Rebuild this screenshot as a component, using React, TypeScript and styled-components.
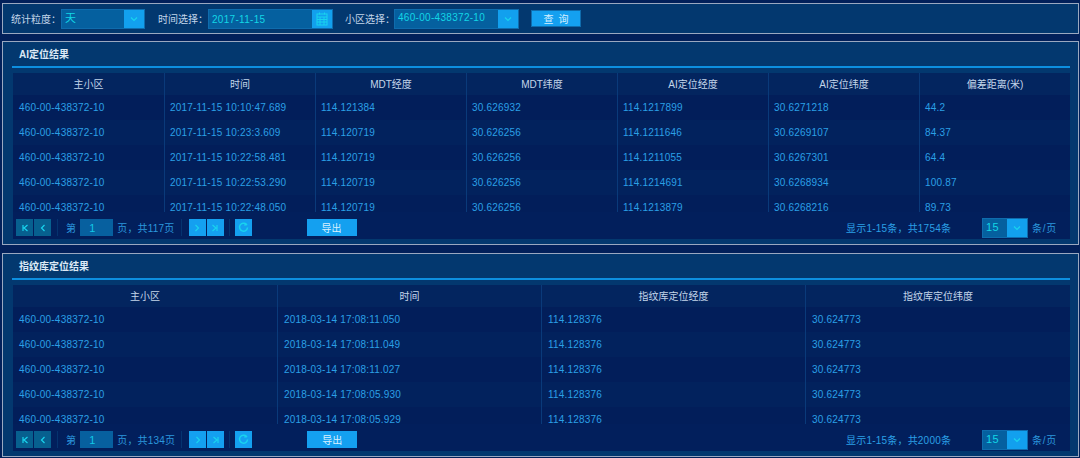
import React from "react";
import styled, { createGlobalStyle } from "styled-components";

const Global = createGlobalStyle`
  html, body { margin: 0; padding: 0; background: #02205a; }
  #root { width: 1080px; height: 458px; overflow: hidden; }
  * { box-sizing: border-box; }
`;
const FONT = `"Liberation Sans", "Noto Sans CJK SC", sans-serif`;
const Page = styled.div`
  width: 1080px; height: 458px; padding: 3px 1px 0 2px;
  display: flex; flex-direction: column; background: #02205a;
  font-family: ${FONT}; font-size: 10px; color: #2f9fe0;
`;
const Toolbar = styled.div`
  height: 31px; flex: none; margin-bottom: 7px; border: 1px solid #9aa8c0; background: #03386f;
  display: flex; align-items: center; padding-left: 8px;
`;
const Label = styled.span`
  color: #c4d6ea; font-size: 10px; white-space: nowrap; width: ${p => p.$w}px; flex: none;
`;
const Combo = styled.div`
  display: flex; height: 20px; flex: none; width: ${p => p.$w}px; margin-right: ${p => p.$mr}px;
  border: 1px solid #0f6cad; background: #05609f;
`;
const ComboText = styled.span`
  flex: 1; min-width: 0; padding-left: 3px; line-height: 16px; font-size: ${p => p.$fs || 10}px;
  color: #12d6e6; letter-spacing: .3px; white-space: nowrap;
`;
const DateText = styled(ComboText)`
  line-height: 20px;
`;
const ComboBtn = styled.span`
  width: 20px; flex: none; background: #12a0ee; display: flex; align-items: center; justify-content: center;
`;
const Query = styled.button`
  width: 50px; height: 17px; border: 1px solid #0f6cad; background: #14a0f0; color: #d8f0ff;
  font: 10px ${FONT}; padding: 0; word-spacing: 2px;
`;
const Panel = styled.section`
  height: 204px; flex: none; border: 1px solid #9aa8c0; background: #03386f;
  display: flex; flex-direction: column; padding: 0 8px 5px 9px; margin-bottom: 8px;
`;
const Title = styled.div`
  height: 26px; flex: none; padding-left: 7px; line-height: 26px; font-size: 10px; font-weight: 700;
  color: #dbe8f5; border-bottom: 2px solid #0d8fe0;
`;
const Body = styled.div`
  height: 166px; flex: none; margin: 5px 0 0 1px; background: #021f5c; display: flex; flex-direction: column;
`;
const TableClip = styled.div`
  height: 139px; overflow: hidden; flex: none;
`;
const Grid = styled.div`
  display: grid; grid-template-columns: ${p => p.$cols};
`;
const Head = styled.div`
  height: 22px; line-height: 24px; text-align: center; color: #c4d6ea; font-size: 10px;
  border-left: 1px solid #0a3a7a; background: #03255f;
  &:first-child { border-left: 0; }
`;
const Cell = styled.div`
  height: 25px; line-height: 25px; padding-left: ${p => p.$pad}px; color: #2ba0e6; font-size: 10px;
  border-left: 1px solid ${p => p.$first ? "transparent" : "#0a3a7a"}; white-space: nowrap; letter-spacing: .2px;
  background: ${p => p.$alt ? "#02225d" : "#021e5a"};
`;
const Pager = styled.div`
  flex: 1; display: flex; align-items: center; padding: 4px 13px 0 3px; min-height: 0;
`;
const Btn = styled.span`
  width: 17px; height: 17px; margin-right: 1px; flex: none; display: flex; align-items: center; justify-content: center;
  background: ${p => p.$on ? "#14a0f0" : "#07608f"};
`;
const Sep = styled.span`
  width: 1px; height: 17px; flex: none; background: #05336f; margin: 0 ${p => p.$r}px 0 ${p => p.$l}px;
`;
const PText = styled.span`
  color: #2b97dc; font-size: 10px; white-space: nowrap; letter-spacing: .2px;
`;
const PerPage = styled(PText)`
  letter-spacing: .7px;
`;
const PageInput = styled.span`
  width: 33px; height: 17px; flex: none; margin: 0 4px; background: #07609f; color: #12c6e6;
  font-size: 11px; line-height: 18px; padding-left: 9px;
`;
const Export = styled.button`
  width: 50px; height: 17px; margin-left: 54px; border: 0; background: #14a0f0; color: #d8f0ff; font: 10px ${FONT}; padding: 0;
`;
const Info = styled.span`
  margin-left: auto; margin-right: 31px; color: #2ba0e6; font-size: 10px; letter-spacing: .2px;
`;
const SizeBox = styled.div`
  width: 46px; height: 20px; flex: none; display: flex; border: 1px solid #0f6cad; background: #05609f; margin-right: 4px;
`;

const Chev = ({ d = "M2 3.5 L5 6.5 L8 3.5" }: { d?: string }) => (
  <svg width="10" height="10" viewBox="0 0 10 10" fill="none" stroke="#19d3ee" strokeWidth="1.2"><path d={d} /></svg>
);
const Calendar = () => (
  <svg width="12" height="14" viewBox="0 0 12 14" fill="none" stroke="#19d3ee" strokeWidth="1">
    <rect x="1" y="2" width="10" height="11" /><path d="M1 5h10M1 7.5h10M1 10h10M4 5v8M8 5v8M3.5 .5v2M8.5 .5v2" />
  </svg>
);
const Refresh = () => (
  <svg width="11" height="11" viewBox="0 0 11 11" fill="none" stroke="#19d3ee" strokeWidth="1.5">
    <path d="M8.6 2.6A4 4 0 1 0 9.5 5.5" /><path d="M6.8 .4 L9.3 2.9 L6.4 3.4" fill="#19d3ee" strokeWidth=".5" />
  </svg>
);

type Data = { title: string; cols: string; pad: number; heads: string[]; rows: string[][]; pages: string; info: string };

const ai: Data = {
  title: "AI定位结果",
  cols: "151px 151px 151px 151px 151px 151px 1fr",
  pad: 5,
  heads: ["主小区", "时间", "MDT经度", "MDT纬度", "AI定位经度", "AI定位纬度", "偏差距离(米)"],
  rows: [
    ["460-00-438372-10", "2017-11-15 10:10:47.689", "114.121384", "30.626932", "114.1217899", "30.6271218", "44.2"],
    ["460-00-438372-10", "2017-11-15 10:23:3.609", "114.120719", "30.626256", "114.1211646", "30.6269107", "84.37"],
    ["460-00-438372-10", "2017-11-15 10:22:58.481", "114.120719", "30.626256", "114.1211055", "30.6267301", "64.4"],
    ["460-00-438372-10", "2017-11-15 10:22:53.290", "114.120719", "30.626256", "114.1214691", "30.6268934", "100.87"],
    ["460-00-438372-10", "2017-11-15 10:22:48.050", "114.120719", "30.626256", "114.1213879", "30.6268216", "89.73"],
  ],
  pages: "页，共117页", info: "显示1-15条，共1754条",
};
const fp: Data = {
  title: "指纹库定位结果",
  cols: "264px 264px 264px 1fr",
  pad: 6,
  heads: ["主小区", "时间", "指纹库定位经度", "指纹库定位纬度"],
  rows: [
    ["460-00-438372-10", "2018-03-14 17:08:11.050", "114.128376", "30.624773"],
    ["460-00-438372-10", "2018-03-14 17:08:11.049", "114.128376", "30.624773"],
    ["460-00-438372-10", "2018-03-14 17:08:11.027", "114.128376", "30.624773"],
    ["460-00-438372-10", "2018-03-14 17:08:05.930", "114.128376", "30.624773"],
    ["460-00-438372-10", "2018-03-14 17:08:05.929", "114.128376", "30.624773"],
  ],
  pages: "页，共134页", info: "显示1-15条，共2000条",
};

const Result = ({ d }: { d: Data }) => (
  <Panel>
    <Title>{d.title}</Title>
    <Body>
      <TableClip>
        <Grid $cols={d.cols}>
          {d.heads.map(h => <Head key={h}>{h}</Head>)}
          {d.rows.map((r, i) => r.map((c, j) => <Cell key={`${i}-${j}`} $first={j === 0} $pad={j === 0 ? 5 : d.pad} $alt={i % 2 === 1}>{c}</Cell>))}
        </Grid>
      </TableClip>
      <Pager>
        <Btn><Chev d="M3 2v6M7.5 2L4 5l3.5 3" /></Btn>
        <Btn><Chev d="M6.5 2L3.5 5l3 3" /></Btn>
        <Sep $l={5} $r={8} />
        <PText>第</PText>
        <PageInput>1</PageInput>
        <PText>{d.pages}</PText>
        <Sep $l={6} $r={7} />
        <Btn $on><Chev d="M3.5 2l3 3-3 3" /></Btn>
        <Btn $on><Chev d="M7 2v6M2.5 2L6 5 2.5 8" /></Btn>
        <Sep $l={4} $r={5} />
        <Btn $on><Refresh /></Btn>
        <Export>导出</Export>
        <Info>{d.info}</Info>
        <SizeBox>
          <ComboText $fs={11}>15</ComboText>
          <ComboBtn><Chev /></ComboBtn>
        </SizeBox>
        <PerPage>条/页</PerPage>
      </Pager>
    </Body>
  </Panel>
);

export default function App() {
  return (
    <Page>
      <Global />
      <Toolbar>
        <Label $w={50}>统计粒度：</Label>
        <Combo $w={84} $mr={13}><ComboText $fs={11}>天</ComboText><ComboBtn><Chev /></ComboBtn></Combo>
        <Label $w={50}>时间选择：</Label>
        <Combo $w={125} $mr={12}><DateText>2017-11-15</DateText><ComboBtn><Calendar /></ComboBtn></Combo>
        <Label $w={49}>小区选择：</Label>
        <Combo $w={125} $mr={12}><ComboText>460-00-438372-10</ComboText><ComboBtn><Chev /></ComboBtn></Combo>
        <Query>查 询</Query>
      </Toolbar>
      <Result d={ai} />
      <Result d={fp} />
    </Page>
  );
}
